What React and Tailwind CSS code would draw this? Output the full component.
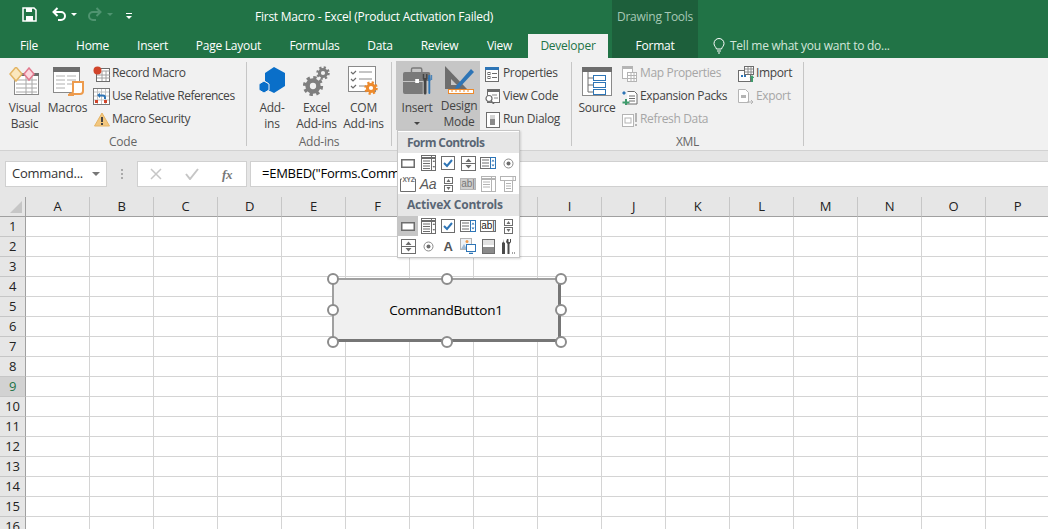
import React from "react";

const G = "#6d6d6d";
const L = "#8a8a8a";
const B = "#2e75b6";
const O = "#ed9b4d";
const D = "#b4b4b4";

function Gear({ cx, cy, r, color }) {
  const c = 2 * Math.PI * r;
  return (
    <g>
      <circle cx={cx} cy={cy} r={r} fill="none" stroke={color} strokeWidth={r * 0.7} strokeDasharray={`${c / 16} ${c / 16}`} />
      <circle cx={cx} cy={cy} r={r * 0.72} fill="none" stroke={color} strokeWidth={r * 0.6} />
    </g>
  );
}

function Svg({ w, h, children, className }) {
  return (
    <svg width={w} height={h} viewBox={`0 0 ${w} ${h}`} className={className} fill="none">
      {children}
    </svg>
  );
}

const IconVB = () => (
  <Svg w={31} h={29}>
    <rect x="5.5" y="6.5" width="24" height="21" fill="#fff" stroke={L} />
    <path d="M5 6h25v3H5z" fill={G} />
    <path d="M7 13h21M7 17h21M7 21h21M7 25h21M17 10v17M23 10v17" stroke="#a8a8a8" />
    <path d="M7 0l6 7-6 7-6-7z" fill="#fbe7bd" stroke="#e3b566" strokeWidth="1.5" />
    <path d="M20 1l5 6-5 6-5-6z" fill="#fbd7de" stroke="#e2798e" strokeWidth="1.5" />
  </Svg>
);
const IconMacros = () => (
  <Svg w={32} h={29} className="ml-[2px]">
    <rect x="0.5" y="0.5" width="26" height="25" fill="#fff" stroke={L} />
    <rect x="0" y="0" width="27" height="5" fill={G} />
    <path d="M3 9h9M14 9h9M3 13h9M14 13h9M3 17h9M14 17h9M3 21h9" stroke="#b0b0b0" />
    <path d="M20 15h10v9a3 3 0 0 1-3 3H16a3 3 0 0 0 4-3z" fill="#fff" stroke={O} strokeWidth="2" />
    <path d="M15 27h6v2h-6z" fill={O} />
  </Svg>
);
const IconRecord = () => (
  <Svg w={17} h={16}>
    <rect x="3.5" y="2.5" width="13" height="13" fill="#fff" stroke={G} />
    <path d="M9 5h8M4 9h13M4 12h13M9 5v10M13 5v10" stroke="#a0a0a0" />
    <circle cx="4.5" cy="4.5" r="4" fill="#d1442a" />
  </Svg>
);
const IconRelative = () => (
  <Svg w={17} h={17}>
    <rect x="0.5" y="0.5" width="16" height="16" fill="#fff" stroke="#777" />
    <path d="M1 4h15M1 8h15M1 12h15M4.5 1v15M8.5 1v15M12.5 1v15" stroke="#c4c4c4" />
    <path d="M4 7l3-2v1.500h3a3 3 0 0 1 3 3V11h-2V9.500a1 1 0 0 0-1-1H7V10z" fill={B} />
    <rect x="2" y="12" width="3" height="3" fill="#d1442a" />
    <rect x="11" y="12" width="3" height="3" fill="#d1442a" />
  </Svg>
);
const IconWarn = () => (
  <Svg w={16} h={15}>
    <path d="M8 1l7.500 13H.5z" fill="#f2c77f" stroke="#e6b466" />
    <path d="M7 5h2v5H7zM7 11h2v2H7z" fill="#444" />
  </Svg>
);
const IconAddins = () => (
  <Svg w={28} h={28}>
    <path d="M16 0l11 6v13l-11 7-6-3v-7l-3-2V6z" fill="#0a6fc9" />
    <path d="M6 14l5 3v6l-5 3-5-3v-6z" fill="#0a6fc9" stroke="#f1f1f1" />
  </Svg>
);
const IconExcelAddins = () => (
  <Svg w={27} h={30}>
    <Gear cx={20} cy={7} r={5} color="#7f7f7f" />
    <Gear cx={10} cy={20} r={7.500} color="#7f7f7f" />
  </Svg>
);
const IconCom = () => (
  <Svg w={32} h={31}>
    <rect x="0.5" y="0.5" width="27" height="25" fill="#fff" stroke={L} />
    <path d="M3 6l2 2 3-3M3 13l2 2 3-3M3 20l2 2 3-3" stroke={G} strokeWidth="1.2" />
    <path d="M11 6h13M11 13h13M11 20h8" stroke={L} />
    <Gear cx={23} cy={22} r={5} color="#ed8a2c" />
  </Svg>
);
const IconInsert = () => (
  <Svg w={32} h={28}>
    <g transform="translate(2 0) scale(.94 1)">
      <path d="M9 5V2.500A1.500 1.500 0 0 1 10.500 1h8A1.500 1.500 0 0 1 20 2.500V5" stroke="#7a7a7a" strokeWidth="1.500" />
      <path d="M2 5h25a2 2 0 0 1 2 2v7H0V7a2 2 0 0 1 2-2z" fill="#7a7a7a" />
      <path d="M0 15h21v12H2a2 2 0 0 1-2-2z" fill="#7a7a7a" />
      <rect x="13" y="12" width="4" height="4" fill="#fff" />
      <path d="M21 12V7l1.500 0V11h2V7L26 7v5l-1 1v13a1 1 0 0 1-3 0V13z" fill="#454545" />
      <path d="M27 8h2l.5 5-.5 1v12a1 1 0 0 1-2 0V14l-.5-1zM30 8h1v5h-1z" fill={B} />
    </g>
  </Svg>
);
const IconDesign = () => (
  <Svg w={31} h={29}>
    <path d="M1 0v23h22z" fill={G} />
    <path d="M7 13v6h6z" fill="#c6c6c6" />
    <path d="M12 20L27 3l3 3L15 22l-4 1z" fill={B} />
    <rect x="4.500" y="23.500" width="25" height="4" fill="#fff" stroke="#ed8a2c" />
    <path d="M8 24v2M12 24v2M16 24v2M20 24v2M24 24v2" stroke="#ed8a2c" />
  </Svg>
);
const IconProperties = () => (
  <Svg w={15} h={16}>
    <rect x="0.5" y="1.500" width="13" height="14" fill="#fff" stroke={G} />
    <rect x="0" y="1" width="14" height="3" fill={B} />
    <rect x="3" y="6.500" width="2" height="2" stroke={G} />
    <rect x="3" y="10.500" width="2" height="2" stroke={G} />
    <path d="M7 7.500h5M7 11.500h5" stroke={G} />
  </Svg>
);
const IconViewCode = () => (
  <Svg w={17} h={15}>
    <rect x="3.500" y="0.500" width="12" height="13" fill="#fff" stroke={G} />
    <rect x="3" y="0" width="13" height="3" fill={G} />
    <path d="M8 6h5M10 9h4" stroke={L} />
    <circle cx="5" cy="9.500" r="3" fill="#fff" stroke={G} strokeWidth="1.200" />
    <path d="M7 12l3 3" stroke={G} strokeWidth="1.500" />
  </Svg>
);
const IconRunDialog = () => (
  <Svg w={14} h={16}>
    <rect x="0.500" y="0.500" width="13" height="15" fill="#fff" stroke={G} />
    <rect x="4" y="3" width="5" height="10" fill="#d4d4d4" />
    <rect x="4" y="7" width="5" height="6" fill={L} />
  </Svg>
);
const IconSource = () => (
  <Svg w={31} h={29}>
    <rect x="0.500" y="0.500" width="29" height="28" fill="#fff" stroke={L} />
    <rect x="0" y="0" width="30" height="5" fill={G} />
    <path d="M6 5v20M6 11h5M6 18h5M6 25h5" stroke={G} />
    <rect x="11.500" y="8.500" width="12" height="5" fill="#fff" stroke={B} />
    <rect x="11.500" y="15.500" width="12" height="5" fill="#fff" stroke={B} />
    <rect x="11.500" y="22.500" width="12" height="5" fill="#fff" stroke={B} />
  </Svg>
);
const IconMap = () => (
  <Svg w={16} h={16}>
    <rect x="0.500" y="0.500" width="10" height="12" fill="#fff" stroke={D} />
    <rect x="0" y="0" width="11" height="3" fill={D} />
    <rect x="5.500" y="6.500" width="9" height="9" fill="#fff" stroke={D} />
    <path d="M6 9.500h8M6 12.500h8M9 7v8M12 7v8" stroke={D} />
  </Svg>
);
const IconExpansion = () => (
  <Svg w={16} h={16}>
    <path d="M5.500 2.500h7l2.500 2.500v10h-10" fill="#fff" stroke={G} />
    <path d="M7 7h6M7 9.500h6M7 12h6" stroke={G} />
    <path d="M0 4l2-2 2 2-2 2z" fill={B} />
    <path d="M3 10h2v2.500h2.500v2H5V17H3v-2.500H.5v-2H3z" fill="#3f9b6c" />
  </Svg>
);
const IconRefresh = () => (
  <Svg w={16} h={16}>
    <rect x="0.500" y="2.500" width="11" height="12" fill="#fff" stroke={D} />
    <rect x="3" y="6" width="6" height="5" stroke={D} />
    <path d="M14 1v9M14 12v2" stroke={D} strokeWidth="2" />
  </Svg>
);
const IconImport = () => (
  <Svg w={16} h={16}>
    <rect x="0.500" y="4.500" width="12" height="11" fill="#fff" stroke={G} />
    <rect x="6.500" y="0.500" width="9" height="8" fill="#fff" stroke={G} />
    <path d="M7 3h8M7 6h8M10 1v7M13 1v7" stroke={L} />
    <path d="M3 10h2M6 10h2" stroke={B} strokeWidth="2" />
    <path d="M14 9l2.500 3H15v4h-2v-4h-1.500z" fill="#3f9b6c" />
  </Svg>
);
const IconExport = () => (
  <Svg w={16} h={16}>
    <path d="M.5.500h7l3 3v10H.5z" fill="#fff" stroke={D} />
    <rect x="3" y="6" width="5" height="3" fill={D} />
    <path d="M9 13h6M13 11l2 2-2 2" stroke={D} />
  </Svg>
);

// dropdown glyphs
const CtlButton = () => (
  <Svg w={14} h={9}>
    <rect x="0.750" y="0.750" width="12.500" height="7.500" fill="#fff" stroke={G} strokeWidth="1.500" />
  </Svg>
);
const CtlCombo = ({ c = G }) => (
  <Svg w={15} h={16}>
    <rect x="0.500" y="0.500" width="14" height="15" fill="#fff" stroke={c} />
    <path d="M0 3h15" stroke={c} strokeWidth="2" />
    <path d="M10.500 1v15" stroke={c} />
    <path d="M2 6h7M2 8.500h7M2 11h7M2 13.500h7" stroke={c} />
    <path d="M11.500 7l1.500-2 1 2zM11.500 11l1.500 2 1-2z" fill={c} />
  </Svg>
);
const CtlCheck = () => (
  <Svg w={14} h={14}>
    <rect x="0.500" y="0.500" width="13" height="13" fill="#fff" stroke={G} />
    <path d="M3 7l3 3 5-6" stroke={B} strokeWidth="2" />
  </Svg>
);
const CtlSpinBig = () => (
  <Svg w={15} h={15}>
    <rect x="0.500" y="0.500" width="14" height="14" fill="#fff" stroke={G} />
    <path d="M1 7.500h13" stroke={G} />
    <path d="M7.500 2.500l3 3.500h-6zM7.500 12.500l3-3.500h-6z" fill={G} />
  </Svg>
);
const CtlList = () => (
  <Svg w={16} h={12}>
    <rect x="0.500" y="0.500" width="15" height="11" fill="#fff" stroke={G} />
    <rect x="10.500" y="0.500" width="5" height="11" fill="#fff" stroke={B} />
    <path d="M2 3h7M2 6h7M2 9h7" stroke={G} />
    <path d="M11.500 4.500l1.500-2 1.500 2zM11.500 7.500l1.500 2 1.500-2z" fill={B} />
  </Svg>
);
const CtlRadio = () => (
  <Svg w={11} h={11}>
    <circle cx="5.500" cy="5.500" r="4.500" fill="#fff" stroke={L} />
    <circle cx="5.500" cy="5.500" r="2" fill={G} />
  </Svg>
);
const CtlGroup = () => (
  <Svg w={16} h={16}>
    <path d="M2 3H.5v12.500h15V3H14" stroke={G} />
    <text x="2.500" y="5.500" fontSize="6.500" fontWeight="700" fontFamily="Liberation Sans" fill={G}>XYZ</text>
  </Svg>
);
const CtlLabel = () => (
  <span className="font-['Liberation_Sans'] text-[14px] italic leading-none text-[#5a5a5a]">Aa</span>
);
const CtlSpin = () => (
  <Svg w={9} h={15}>
    <rect x="0.500" y="0.500" width="8" height="6" fill="#fff" stroke={G} />
    <rect x="0.500" y="8.500" width="8" height="6" fill="#fff" stroke={G} />
    <path d="M4.500 2l2 3h-4zM4.500 13l2-3h-4z" fill={G} />
  </Svg>
);
const CtlText = ({ on }) => (
  <span className={`flex h-[12px] w-[16px] items-center justify-center border font-['Liberation_Sans'] text-[10px] leading-none tracking-normal ${on ? "border-[#6d6d6d] bg-white text-[#222]" : "border-[#b4b4b4] bg-[#cfcfcf] text-[#777]"}`}>
    ab|
  </span>
);
const CtlScrollOff = () => (
  <Svg w={15} h={16}>
    <rect x="0.500" y="0.500" width="14" height="15" fill="#fff" stroke={D} />
    <path d="M0 3h15" stroke={D} strokeWidth="2" />
    <path d="M10.500 1v15M2 6h7M2 8.500h7M2 11h7" stroke={D} />
  </Svg>
);
const CtlComboOff = () => (
  <Svg w={16} h={16}>
    <rect x="0.500" y="0.500" width="15" height="4" fill="#fff" stroke={D} />
    <rect x="4.500" y="4.500" width="8" height="11" fill="#fff" stroke={D} />
    <path d="M6 7.500h5M6 10h5M6 12.500h5M13 1v3" stroke={D} />
  </Svg>
);
const CtlLetter = () => (
  <span className="font-['Liberation_Sans'] text-[13px] font-bold leading-none text-[#555]">A</span>
);
const CtlImage = () => (
  <Svg w={16} h={16}>
    <rect x="0.500" y="0.500" width="11" height="11" fill="#eef2f6" stroke={D} />
    <circle cx="7" cy="3.500" r="1.500" fill={O} />
    <path d="M1 11l3-5 3 5z" fill="#9fb9d3" />
    <rect x="6.500" y="6.500" width="9" height="7" fill="#fff" stroke={B} />
    <path d="M9 15.500h4" stroke={B} strokeWidth="1.500" />
  </Svg>
);
const CtlToggle = () => (
  <Svg w={13} h={15}>
    <rect x="0.500" y="0.500" width="12" height="14" fill="#fff" stroke={G} />
    <rect x="1" y="1" width="11" height="5" fill="#e2e2e2" />
    <rect x="1" y="8" width="11" height="6" fill={L} />
  </Svg>
);
const CtlMore = () => (
  <Svg w={15} h={15}>
    <path d="M2.500 0v3L4 4v11H1V4l1-1zM6 0l1.500 0v3H9V0h1v3L8.500 5v10h-2V5L5 3z" fill="#4a4a4a" />
    <path d="M11 14h1M13 14h1M15 14h1" stroke="#444" />
  </Svg>
);

function Large({ icon, lines, w, on, caret }) {
  return (
    <div className={`flex flex-col items-center self-start ${w} ${on ? "-mt-px h-[69px] bg-[#c6c6c6] pt-px" : ""}`}>
      <div className="flex h-[38px] items-center justify-center">{icon}</div>
      {lines.map((t) => (
        <div key={t} className="h-4 whitespace-nowrap leading-4">{t}</div>
      ))}
      {caret && <div className="mt-[6px] h-0 w-0 border-x-[3px] border-t-[3px] border-x-transparent border-t-[#444]" />}
    </div>
  );
}

function Small({ icon, label, off, tight }) {
  return (
    <div className={`flex h-[23px] items-center gap-[2px] whitespace-nowrap ${tight ? "tracking-[-0.47px]" : "tracking-[-0.35px]"} ${off ? "text-[#a6a6a6]" : ""}`}>
      <div className="flex w-[17px] justify-center">{icon}</div>
      <span className="pb-[2px]">{label}</span>
    </div>
  );
}

function Group({ w, label, pad, children }) {
  return (
    <div className={`h-[84px] shrink-0 border-r border-[#c6c6c6] ${w}`}>
      <div className={`flex h-[75px] ${pad}`}>{children}</div>
      <div className="h-[10px] text-center leading-[10px] text-[#666]">{label}</div>
    </div>
  );
}

const tabs = [
  ["Home", "ml-1 w-[61px]"],
  ["Insert", "w-[59px]"],
  ["Page Layout", "w-[93px]"],
  ["Formulas", "w-[79px]"],
  ["Data", "w-[52px]"],
  ["Review", "w-[67px]"],
  ["View", "w-[53px]"],
];

const cols = "ABCDEFGHIJKLMNOP".split("");
const rows = Array.from({ length: 16 }, (_, i) => i + 1);

const cells1 = [<CtlButton />, <CtlCombo />, <CtlCheck />, <CtlSpinBig />, <CtlList />, <CtlRadio />, <CtlGroup />, <CtlLabel />, <CtlSpin />, <CtlText />, <CtlScrollOff />, <CtlComboOff />];
const cells2 = [<CtlButton />, <CtlCombo />, <CtlCheck />, <CtlList />, <CtlText on />, <CtlSpin />, <CtlSpinBig />, <CtlRadio />, <CtlLetter />, <CtlImage />, <CtlToggle />, <CtlMore />];

function Palette({ items, active, gap }) {
  return (
    <div className={`grid grid-cols-[repeat(6,20px)] grid-rows-[20px_20px] ${gap}`}>
      {items.map((c, i) => (
        <div key={i} className={`flex items-center justify-center ${active === i ? "bg-[#c6c6c6]" : ""}`}>{c}</div>
      ))}
    </div>
  );
}

function Handle({ pos }) {
  return <div className={`absolute h-[12px] w-[12px] rounded-full border-2 border-[#8c8c8c] bg-white ${pos}`} />;
}

export default function App() {
  return (
    <div className="relative h-[529px] w-[1048px] overflow-hidden bg-white font-['Open_Sans',sans-serif] text-[12px] tracking-[-0.25px] text-[#444]">
      {/* title bar + tabs */}
      <div className="h-[58px] bg-[#217346] text-white">
        <div className="flex h-[34px]">
          <div className="flex w-[255px] items-start pt-[7px]">
            <Svg w={15} h={15} className="ml-[22px]">
              <path d="M1 1h11l2 2v11H1z" stroke="#fff" strokeWidth="1.500" />
              <rect x="4" y="1" width="6" height="4" fill="#fff" />
              <rect x="4" y="9" width="7" height="5" fill="#fff" />
            </Svg>
            <Svg w={16} h={15} className="ml-[14px]">
              <path d="M3 5h7a4 4 0 0 1 0 8H7" stroke="#fff" strokeWidth="2" />
              <path d="M6.500 1L2.500 5l4 4" stroke="#fff" strokeWidth="2" />
            </Svg>
            <div className="ml-[4px] mt-[6px] h-0 w-0 border-x-[3px] border-t-[3px] border-x-transparent border-t-white" />
            <Svg w={16} h={15} className="ml-[10px]">
              <path d="M13 5H6a4 4 0 0 0 0 8h3" stroke="#4f9470" strokeWidth="2" />
              <path d="M9.500 1l4 4-4 4" stroke="#4f9470" strokeWidth="2" />
            </Svg>
            <div className="ml-[4px] mt-[6px] h-0 w-0 border-x-[3px] border-t-[3px] border-x-transparent border-t-[#4f9470]" />
            <div className="ml-[13px] mt-[6px] flex flex-col items-center gap-[2px]">
              <div className="h-px w-[6px] bg-white" />
              <div className="h-0 w-0 border-x-[3px] border-t-[3px] border-x-transparent border-t-white" />
            </div>
          </div>
          <div className="w-[357px] pt-[9px] leading-4">First Macro - Excel (Product Activation Failed)</div>
          <div className="w-[86px] bg-[#1d5f3b] pt-[9px] text-center leading-4 text-[#a6c8b5]">Drawing Tools</div>
        </div>
        <div className="flex h-[24px] leading-[24px]">
          <div className="w-[58px] text-center">File</div>
          {tabs.map(([t, w]) => (
            <div key={t} className={`text-center ${w}`}>{t}</div>
          ))}
          <div className="ml-[2px] w-[80px] bg-[#f1f1f1] text-center text-[#217346]">Developer</div>
          <div className="ml-[4px] w-[86px] bg-[#1d5f3b] text-center">Format</div>
          <div className="ml-[15px] flex items-center gap-[5px] text-[#d3e6da]">
            <Svg w={12} h={16}>
              <path d="M3.500 11C3 9 1 8 1 5.500a5 5 0 0 1 10 0C11 8 9 9 8.500 11zM4 13h4M5 15h2" stroke="#fff" />
            </Svg>
            Tell me what you want to do...
          </div>
        </div>
      </div>

      {/* ribbon */}
      <div className="flex h-[93px] border-b border-[#d2d2d2] bg-[#f1f1f1] pt-[4px]">
        <Group w="w-[247px]" label="Code" pad="pl-[3px]">
          <Large w="w-[43px]" icon={<IconVB />} lines={["Visual", "Basic"]} />
          <Large w="w-[43px]" icon={<IconMacros />} lines={["Macros"]} />
          <div className="ml-[4px]">
            <Small icon={<IconRecord />} label="Record Macro" />
            <Small tight icon={<IconRelative />} label="Use Relative References" />
            <Small icon={<IconWarn />} label="Macro Security" />
          </div>
        </Group>
        <Group w="w-[145px]" label="Add-ins" pad="pl-[3px]">
          <Large w="w-[44px]" icon={<IconAddins />} lines={["Add-", "ins"]} />
          <Large w="w-[45px]" icon={<IconExcelAddins />} lines={["Excel", "Add-ins"]} />
          <div className="ml-px">
            <Large w="w-[47px]" icon={<IconCom />} lines={["COM", "Add-ins"]} />
          </div>
        </Group>
        <Group w="w-[180px]" label="Controls" pad="pl-[4px]">
          <Large w="w-[42px]" on caret icon={<IconInsert />} lines={["Insert"]} />
          <Large w="w-[42px]" on icon={<IconDesign />} lines={["Design", "Mode"]} />
          <div className="ml-[4px]">
            <Small icon={<IconProperties />} label="Properties" />
            <Small icon={<IconViewCode />} label="View Code" />
            <Small icon={<IconRunDialog />} label="Run Dialog" />
          </div>
        </Group>
        <Group w="w-[232px]" label="XML" pad="pl-[5px]">
          <Large w="w-[40px]" icon={<IconSource />} lines={["Source"]} />
          <div className="ml-[4px] w-[116px]">
            <Small off icon={<IconMap />} label="Map Properties" />
            <Small icon={<IconExpansion />} label="Expansion Packs" />
            <Small off icon={<IconRefresh />} label="Refresh Data" />
          </div>
          <div>
            <Small icon={<IconImport />} label="Import" />
            <Small off icon={<IconExport />} label="Export" />
          </div>
        </Group>
      </div>

      {/* formula bar */}
      <div className="flex h-[46px] items-start bg-[#e6e6e6] pt-[10px] text-[13px] text-[#333]">
        <div className="ml-[5px] flex h-[26px] w-[102px] shrink-0 items-center justify-between border border-[#d0d0d0] bg-white pl-[6px] pr-[6px]">
          Command...
          <div className="h-0 w-0 border-x-[4px] border-t-[4px] border-x-transparent border-t-[#777]" />
        </div>
        <div className="ml-[14px] mt-[8px] flex flex-col gap-[2px]">
          <div className="h-[2px] w-[2px] bg-[#aaa]" />
          <div className="h-[2px] w-[2px] bg-[#aaa]" />
          <div className="h-[2px] w-[2px] bg-[#aaa]" />
        </div>
        <div className="ml-[14px] flex h-[26px] w-[110px] shrink-0 items-center border border-[#d0d0d0] bg-white">
          <Svg w={12} h={12} className="ml-[12px]">
            <path d="M1 1l10 10M11 1L1 11" stroke="#c6c6c6" strokeWidth="1.500" />
          </Svg>
          <Svg w={14} h={12} className="ml-[23px]">
            <path d="M1 6l4 5 8-10" stroke="#c6c6c6" strokeWidth="2" />
          </Svg>
          <span className="ml-[23px] font-['Liberation_Serif',serif] text-[13px] font-bold italic leading-none text-[#777]">fx</span>
        </div>
        <div className="ml-[3px] flex h-[26px] flex-1 items-center border border-r-0 border-[#d0d0d0] bg-white pl-[11px] text-black">
          =EMBED("Forms.CommandButton.1","")
        </div>
      </div>

      {/* sheet */}
      <div className="flex h-[20px] bg-[#e6e6e6] text-[13px] text-[#222]">
        <div className="flex h-[20px] w-[26px] shrink-0 items-end justify-end border-r border-b border-[#a0a0a0] pb-[3px] pr-[3px]">
          <div className="h-0 w-0 border-b-[12px] border-l-[12px] border-b-[#c6c6c6] border-l-transparent" />
        </div>
        {cols.map((c) => (
          <div key={c} className="flex h-[20px] w-[64px] shrink-0 items-center justify-center border-b border-r border-b-[#a0a0a0] border-r-[#c6c6c6]">
            {c}
          </div>
        ))}
      </div>
      {rows.map((r) => (
        <div key={r} className="flex h-[20px]">
          <div className={`flex w-[26px] shrink-0 items-center justify-center border-b border-r border-b-[#c6c6c6] border-r-[#a0a0a0] text-[13px] ${r === 9 ? "bg-[#d2d2d2] text-[#217346]" : "bg-[#e6e6e6] text-[#222]"}`}>
            {r}
          </div>
          {cols.map((c) => (
            <div key={c} className="h-[20px] w-[64px] shrink-0 border-b border-r border-[#d4d4d4]" />
          ))}
        </div>
      ))}

      {/* CommandButton on the sheet */}
      <div className="absolute left-[332px] top-[278px] flex h-[64px] w-[229px] items-center justify-center border-2 border-b-[3px] border-r-[3px] border-[#a0a0a0] border-b-[#767676] border-r-[#767676] bg-[#f0f0f0] pt-[2px] text-[13.500px] tracking-[-0.2px] text-black">
        CommandButton1
        <Handle pos="-left-[7px] -top-[7px]" />
        <Handle pos="left-[107px] -top-[7px]" />
        <Handle pos="-right-[9px] -top-[7px]" />
        <Handle pos="-left-[7px] top-[24px]" />
        <Handle pos="-right-[9px] top-[24px]" />
        <Handle pos="-left-[7px] -bottom-[9px]" />
        <Handle pos="left-[107px] -bottom-[9px]" />
        <Handle pos="-right-[9px] -bottom-[9px]" />
      </div>

      {/* Insert dropdown */}
      <div className="absolute left-[397px] top-[130px] h-[128px] w-[123px] border border-[#c6c6c6] bg-white pt-px shadow-[1px_1px_2px_rgba(0,0,0,0.15)]">
        <div className="h-[21px] bg-[#e6e6e6] pl-[9px] font-bold leading-[21px] tracking-[-0.6px] text-[#5a6675]">Form Controls</div>
        <Palette items={cells1} gap="gap-y-px" />
        <div className="h-[22px] bg-[#e6e6e6] pl-[9px] font-bold leading-[22px] tracking-[-0.2px] text-[#5a6675]">ActiveX Controls</div>
        <Palette items={cells2} gap="gap-y-0" active={0} />
      </div>
    </div>
  );
}
